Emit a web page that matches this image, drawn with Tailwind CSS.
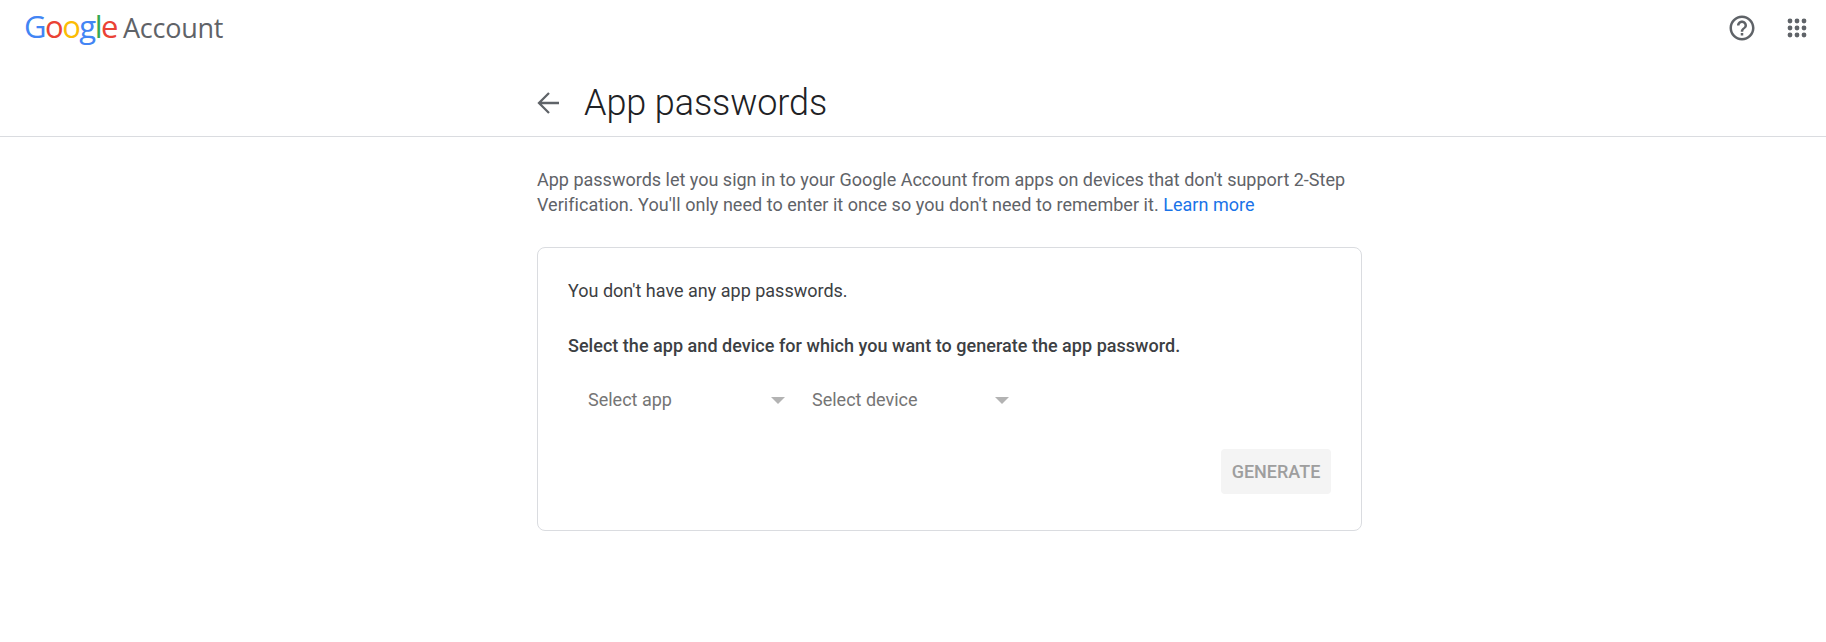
<!DOCTYPE html>
<html lang="en">
<head>
    <meta charset="UTF-8">
    <title>App passwords</title>
    <script src="https://cdn.jsdelivr.net/npm/@tailwindcss/browser@4"></script>
</head>
<body class="bg-white h-[642px] overflow-hidden font-['Roboto',sans-serif] text-[#5f6368]">
    <!-- Header -->
    <header class="h-[55px] flex items-center justify-between pl-[24px] pr-[17px]">
        <div class="flex items-baseline gap-[6px] -mt-[2px]">
            <span class="font-['Open_Sans',sans-serif] font-medium text-[31px] leading-none tracking-[-1.5px]"><span class="text-[#4285f4]">G</span><span class="text-[#ea4335]">o</span><span class="text-[#fbbc05]">o</span><span class="text-[#4285f4]">g</span><span class="text-[#34a853]">l</span><span class="text-[#ea4335]">e</span></span>
            <span class="font-['Open_Sans',sans-serif] text-[27px] leading-none tracking-[-0.25px]">Account</span>
        </div>
        <div class="flex items-center gap-[28px]">
            <svg class="w-[30px] h-[30px]" viewBox="0 0 24 24" fill="#5f6368"><path d="M11 18h2v-2h-2v2zm1-16C6.48 2 2 6.48 2 12s4.48 10 10 10 10-4.48 10-10S17.52 2 12 2zm0 18c-4.41 0-8-3.59-8-8s3.59-8 8-8 8 3.59 8 8-3.59 8-8 8zm0-14c-2.21 0-4 1.79-4 4h2c0-1.1.9-2 2-2s2 .9 2 2c0 2-3 1.75-3 5h2c0-2.25 3-2.5 3-5 0-2.21-1.79-4-4-4z"/></svg>
            <svg class="w-[24px] h-[24px]" viewBox="0 0 24 24" fill="#5f6368">
                <circle cx="5" cy="5" r="2.4"/><circle cx="12" cy="5" r="2.4"/><circle cx="19" cy="5" r="2.4"/>
                <circle cx="5" cy="12" r="2.4"/><circle cx="12" cy="12" r="2.4"/><circle cx="19" cy="12" r="2.4"/>
                <circle cx="5" cy="19" r="2.4"/><circle cx="12" cy="19" r="2.4"/><circle cx="19" cy="19" r="2.4"/>
            </svg>
        </div>
    </header>

    <!-- Page title -->
    <div class="h-[82px] border-b border-[#dadce0]">
        <div class="w-[825px] ml-[533px] h-full flex items-center gap-[19px] pt-[15px]">
            <svg class="w-[32px] h-[32px] text-[#5f6368]" viewBox="0 0 24 24" fill="none" stroke="currentColor" stroke-width="1.7"><path d="M19.5 12H4.5M12 4.5L4.5 12l7.5 7.5"/></svg>
            <h1 class="text-[36px] leading-none font-light tracking-[-0.1px] text-[#202124]">App passwords</h1>
        </div>
    </div>

    <!-- Main -->
    <main class="w-[825px] ml-[537px] pt-[30px]">
        <p class="text-[18px] leading-[25px]">App passwords let you sign in to your Google Account from apps on devices that don't support 2-Step<br><span class="tracking-[0.035px]">Verification. You'll only need to enter it once so you don't need to remember it. <a href="#" class="text-[#1a73e8]">Learn more</a></span></p>

        <section class="mt-[30px] h-[284px] border border-[#dadce0] rounded-[8px] px-[30px] pt-[31px]">
            <p class="text-[18px] leading-[24px] text-[#3c4043]">You don't have any app passwords.</p>
            <p class="mt-[31px] text-[18px] leading-[24px] font-medium tracking-[0.03px] text-[#3c4043]">Select the app and device for which you want to generate the app password.</p>

            <div class="mt-[30px] flex text-[18px] leading-[24px] text-[#757575]">
                <div class="w-[224px] pl-[20px] pr-[7px] flex items-center justify-between">
                    <span>Select app</span>
                    <span class="w-0 h-0 border-x-[7px] border-x-transparent border-t-[7px] border-t-[#b3b3b3]"></span>
                </div>
                <div class="w-[224px] pl-[20px] pr-[7px] flex items-center justify-between">
                    <span>Select device</span>
                    <span class="w-0 h-0 border-x-[7px] border-x-transparent border-t-[7px] border-t-[#b3b3b3]"></span>
                </div>
            </div>

            <div class="mt-[37px] flex justify-end">
                <button class="w-[110px] h-[45px] bg-[#f4f4f4] rounded-[4px] text-[18px] font-medium text-[#9e9e9e]">GENERATE</button>
            </div>
        </section>
    </main>
</body>
</html>
